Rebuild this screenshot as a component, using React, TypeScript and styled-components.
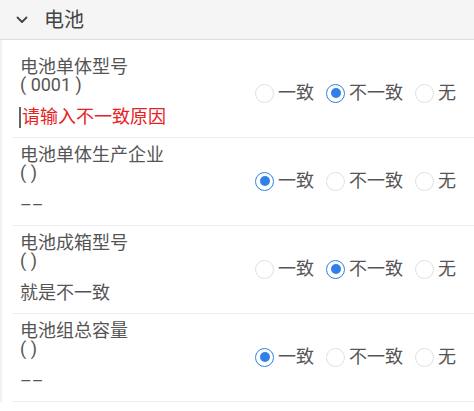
import React from "react";
import styled, { createGlobalStyle } from "styled-components";

const GlobalStyle = createGlobalStyle`
  html, body { margin: 0; padding: 0; background: #fff; }
  body { font-family: Roboto, "Noto Sans CJK SC", sans-serif; }
`;

const Page = styled.div`
  width: 474px;
  height: 411px;
  overflow: hidden;
  background: #fff;
`;

const Header = styled.div`
  height: 39px;
  display: flex;
  align-items: center;
  padding-left: 16px;
  gap: 16px;
  background: #f5f5f5;
  border-bottom: 1px solid #dedede;
  color: #444;
  font-size: 20px;
  line-height: 24px;
`;

const Body = styled.div`
  padding-top: 10px;
  border-left: 2px solid #f1f1f1;
`;

const Row = styled.div`
  margin-left: 10px;
  padding: 7px 18px 8px 8px;
  border-bottom: 1px solid #eeeeee;
  display: flex;
  align-items: center;
  justify-content: space-between;
`;

const Info = styled.div`
  display: flex;
  flex-direction: column;
  color: #555;
  font-size: 18px;
`;

const Title = styled.div`
  line-height: 20px;
  height: 20px;
`;

const Sub = styled.div`
  line-height: 16px;
  height: 16px;
`;

const Value = styled.div<{ $red?: boolean }>`
  margin-top: 12px;
  height: 24px;
  line-height: 24px;
  display: flex;
  align-items: center;
  color: ${(p) => (p.$red ? "#e8211f" : "#555")};
`;

const Caret = styled.span`
  width: 2px;
  height: 21px;
  background: #666;
  margin-left: -1px;
  margin-right: 1px;
`;

const Group = styled.div`
  display: flex;
  align-items: center;
  gap: 12px;
`;

const Option = styled.label`
  display: flex;
  align-items: center;
  gap: 4px;
  color: #555;
  font-size: 18px;
  line-height: 20px;
`;

const Circle = styled.span<{ $on?: boolean }>`
  box-sizing: border-box;
  width: 19px;
  height: 19px;
  border-radius: 50%;
  border: ${(p) => (p.$on ? "1.5px solid #2f80e8" : "1.5px solid #e0e0e0")};
  display: flex;
  align-items: center;
  justify-content: center;
  &::after {
    content: "";
    display: ${(p) => (p.$on ? "block" : "none")};
    width: 10px;
    height: 10px;
    border-radius: 50%;
    background: #2f80e8;
  }
`;

const Chevron = () => (
  <svg width="12" height="8" viewBox="0 0 12 8" fill="none">
    <path d="M1.5 1.5 L6 6 L10.5 1.5" stroke="#444" strokeWidth="1.8" strokeLinecap="round" strokeLinejoin="round" />
  </svg>
);

type Item = {
  title: string;
  sub: string;
  value: string;
  input?: boolean;
  checked: number;
};

const items: Item[] = [
  { title: "电池单体型号", sub: "( 0001 )", value: "请输入不一致原因", input: true, checked: 1 },
  { title: "电池单体生产企业", sub: "( )", value: "––", checked: 0 },
  { title: "电池成箱型号", sub: "( )", value: "就是不一致", checked: 1 },
  { title: "电池组总容量", sub: "( )", value: "––", checked: 0 },
];

const labels = ["一致", "不一致", "无"];

export default function App() {
  return (
    <Page>
      <GlobalStyle />
      <Header>
        <Chevron />
        <span>电池</span>
      </Header>
      <Body>
        {items.map((it, i) => (
          <Row key={i}>
            <Info>
              <Title>{it.title}</Title>
              <Sub>{it.sub}</Sub>
              <Value $red={it.input}>
                {it.input && <Caret />}
                {it.value}
              </Value>
            </Info>
            <Group>
              {labels.map((l, j) => (
                <Option key={j}>
                  <Circle $on={it.checked === j} />
                  {l}
                </Option>
              ))}
            </Group>
          </Row>
        ))}
      </Body>
    </Page>
  );
}
